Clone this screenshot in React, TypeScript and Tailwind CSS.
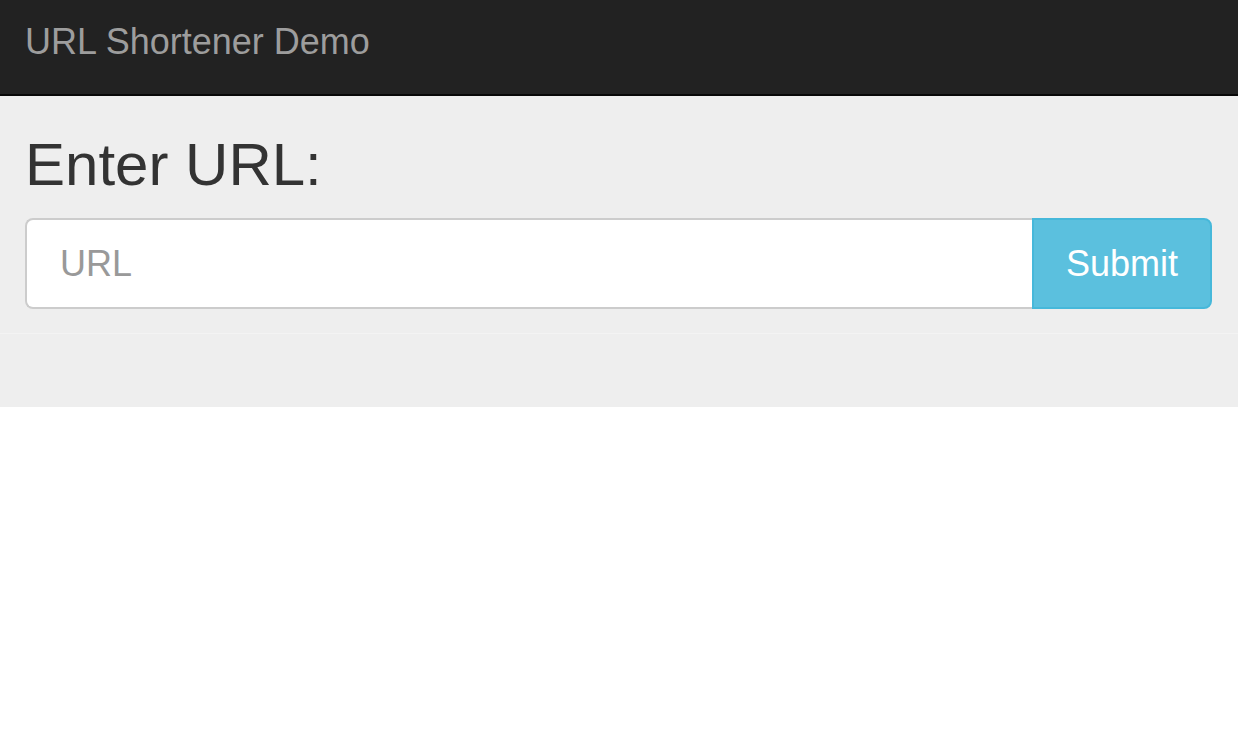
import React from 'react';

const App = () => {
  return (
    <div className="min-h-screen bg-white font-['Liberation_Sans',Arial,sans-serif]">
      {/* Navbar */}
      <nav className="h-[96px] bg-[#222] border-b-2 border-[#080808] px-[25px] pt-[24px]">
        <span className="block text-[36px] leading-[36px] text-[#9d9d9d]">URL Shortener Demo</span>
      </nav>

      {/* Form area */}
      <div className="bg-[#eee]">
        <div className="pl-[25px] pr-[26px] pt-[39px] pb-[24px]">
          <h2 className="text-[60px] leading-[60px] text-[#333] font-normal">Enter URL:</h2>
          <form className="mt-[23px] flex h-[91px]" onSubmit={(e) => e.preventDefault()}>
            <input
              type="text"
              placeholder="URL"
              className="flex-1 min-w-0 h-full bg-white border-2 border-r-0 border-[#ccc] rounded-l-[8px] pl-[33px] text-[36px] text-[#555] placeholder:text-[#999] outline-none"
            />
            <button
              type="submit"
              className="w-[180px] h-full bg-[#5bc0de] border-2 border-[#46b8da] rounded-r-[8px] text-[36px] text-white flex items-center justify-center"
            >
              Submit
            </button>
          </form>
        </div>
        <div className="h-[74px] border-t border-[#f3f3f3]" />
      </div>
    </div>
  );
};

export default App;
